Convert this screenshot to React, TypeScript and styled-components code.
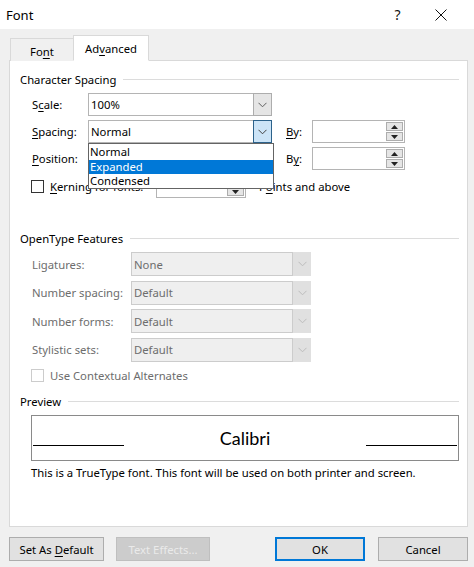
import React from "react";
import styled, { createGlobalStyle, css } from "styled-components";

const Global = createGlobalStyle`
  html, body { margin: 0; padding: 0; background: #f0f0f0; }
  body {
    font-family: "Noto Sans", "Liberation Sans", sans-serif;
    font-size: 11.3px;
    color: #000;
  }
  * { box-sizing: border-box; }
`;

const Window = styled.div`
  width: 474px;
  height: 567px;
  background: #f0f0f0;
  display: flex;
  flex-direction: column;
  overflow: hidden;
`;

const TitleBar = styled.div`
  height: 29px;
  background: #fff;
  display: flex;
  align-items: center;
  padding-left: 6px;
  padding-right: 12px;
  flex-shrink: 0;
`;

const Title = styled.div`
  flex: 1;
  font-size: 13px;
`;

const TitleButton = styled.div`
  width: 43px;
  display: flex;
  justify-content: center;
  align-items: center;
  font-size: 14px;
  color: #111;
`;

const Body = styled.div`
  padding: 6px 6px 0 9px;
`;

const TabStrip = styled.div`
  display: flex;
  align-items: flex-end;
  height: 26px;
  margin-bottom: -1px;
  position: relative;
  z-index: 1;
`;

const Tab = styled.div<{ $active?: boolean }>`
  display: flex;
  align-items: center;
  justify-content: center;
  border: 1px solid #d9d9d9;
  ${(p) =>
    p.$active
      ? css`
          background: #fff;
          height: 26px;
          width: 76px;
          border-bottom-color: #fff;
          margin-left: -1px;
        `
      : css`
          background: #f0f0f0;
          height: 23px;
          width: 64px;
          margin-left: 1px;
          border-bottom: none;
          padding-top: 2px;
        `}
`;

const Panel = styled.div`
  background: #fff;
  border: 1px solid #d9d9d9;
  width: 459px;
  height: 467px;
  padding: 10px 0 0 10px;
`;

const GroupHeader = styled.div<{ $mt?: number }>`
  display: flex;
  align-items: center;
  height: 16px;
  margin-top: ${(p) => p.$mt ?? 0}px;
  &::after {
    content: "";
    flex: 1;
    height: 1px;
    background: #dcdcdc;
    margin-left: 7px;
    margin-right: 8px;
  }
`;

const Rows = styled.div<{ $gap: number; $mt: number }>`
  display: flex;
  flex-direction: column;
  gap: ${(p) => p.$gap}px;
  margin-top: ${(p) => p.$mt}px;
  padding-left: 12px;
`;

const Row = styled.div<{ $h?: number; $mt?: number }>`
  display: flex;
  align-items: center;
  height: ${(p) => p.$h ?? 23}px;
  margin-top: ${(p) => p.$mt ?? 0}px;
`;

const Label = styled.div<{ $w: number; $disabled?: boolean; $ml?: number }>`
  width: ${(p) => p.$w}px;
  flex-shrink: 0;
  margin-left: ${(p) => p.$ml ?? 0}px;
  color: ${(p) => (p.$disabled ? "#6d6d6d" : "#000")};
  white-space: nowrap;
`;

const U = styled.span`
  text-decoration: underline;
  text-underline-offset: 2px;
`;

const SelectBox = styled.div<{ $w: number; $h?: number; $disabled?: boolean }>`
  position: relative;
  width: ${(p) => p.$w}px;
  height: ${(p) => p.$h ?? 23}px;
  flex-shrink: 0;
  display: flex;
  border: 1px solid ${(p) => (p.$disabled ? "#cccccc" : "#b4b4b4")};
  background: ${(p) => (p.$disabled ? "#efefef" : "#fff")};
  color: ${(p) => (p.$disabled ? "#6d6d6d" : "#000")};
`;

const SelectValue = styled.div`
  flex: 1;
  display: flex;
  align-items: center;
  padding-left: 2px;
`;

const ArrowButton = styled.div<{ $focused?: boolean; $disabled?: boolean }>`
  width: 19px;
  display: flex;
  align-items: center;
  justify-content: center;
  ${(p) =>
    p.$disabled
      ? css`
          background: #e0e0e0;
          margin: -1px -1px -1px 0;
          border-left: 1px solid #cccccc;
        `
      : p.$focused
      ? css`
          background: #cce4f7;
          border: 1px solid #2c628b;
          margin: -1px -1px -1px 0;
        `
      : css`
          background: #e5e5e5;
          border: 1px solid #adadad;
          margin: -1px -1px -1px 0;
        `}
`;

const Chevron = ({ color }: { color: string }) => (
  <svg width="9" height="6" viewBox="0 0 9 6">
    <path d="M0.5 0.8 L4.5 4.8 L8.5 0.8" fill="none" stroke={color} strokeWidth="1" />
  </svg>
);

const DropList = styled.div`
  position: absolute;
  top: 22px;
  left: -1px;
  width: 186px;
  height: 46px;
  background: #fff;
  border: 1px solid #646464;
  padding-top: 1px;
  z-index: 5;
`;

const DropItem = styled.div<{ $selected?: boolean }>`
  height: 14.6px;
  line-height: 14.6px;
  padding-left: 1px;
  background: ${(p) => (p.$selected ? "#0078d7" : "transparent")};
  color: ${(p) => (p.$selected ? "#fff" : "#000")};
`;

const SpinBox = styled.div<{ $w: number }>`
  width: ${(p) => p.$w}px;
  height: 23px;
  flex-shrink: 0;
  border: 1px solid #b4b4b4;
  background: #fff;
  display: flex;
  justify-content: flex-end;
  padding: 1px;
`;

const SpinButtons = styled.div`
  width: 17px;
  display: flex;
  flex-direction: column;
  gap: 1px;
`;

const SpinHalf = styled.div`
  flex: 1;
  background: #e5e5e5;
  border: 1px solid #adadad;
  display: flex;
  align-items: center;
  justify-content: center;
`;

const Tri = ({ up }: { up?: boolean }) => (
  <svg width="7" height="4" viewBox="0 0 7 4">
    <path d={up ? "M0 4 L3.5 0 L7 4 Z" : "M0 0 L3.5 4 L7 0 Z"} fill="#222" />
  </svg>
);

const Spin = ({ w }: { w: number }) => (
  <SpinBox $w={w}>
    <SpinButtons>
      <SpinHalf>
        <Tri up />
      </SpinHalf>
      <SpinHalf>
        <Tri />
      </SpinHalf>
    </SpinButtons>
  </SpinBox>
);

const Check = styled.div<{ $disabled?: boolean }>`
  width: 13px;
  height: 13px;
  flex-shrink: 0;
  border: 1px solid ${(p) => (p.$disabled ? "#cccccc" : "#333")};
  background: #fff;
  margin-left: -1px;
  margin-right: 6px;
`;

const PreviewBox = styled.div`
  margin: 6px 0 0 11px;
  width: 428px;
  height: 46px;
  border: 1px solid #8a8a8a;
  display: flex;
  align-items: flex-end;
  justify-content: space-between;
  padding: 0 1px 14px 1px;
  position: relative;
`;

const PreviewLine = styled.div`
  width: 91px;
  height: 1px;
  background: #000;
`;

const PreviewText = styled.div`
  position: absolute;
  left: 0;
  right: 0;
  top: 10px;
  text-align: center;
  font-family: Lato, "Noto Sans", sans-serif;
  font-size: 18px;
  line-height: 24px;
`;

const Note = styled.div`
  margin: 4px 0 0 11px;
  line-height: 16px;
`;

const ButtonBar = styled.div`
  display: flex;
  align-items: center;
  padding: 10px 6px 0 9px;
`;

const Button = styled.div<{ $w: number; $disabled?: boolean; $default?: boolean; $ml?: number }>`
  width: ${(p) => p.$w}px;
  height: 24px;
  margin-left: ${(p) => p.$ml ?? 0}px;
  display: flex;
  align-items: center;
  justify-content: center;
  background: ${(p) => (p.$disabled ? "#cccccc" : "#e1e1e1")};
  color: ${(p) => (p.$disabled ? "#eaeaea" : "#000")};
  border: ${(p) =>
    p.$default ? "2px solid #0078d7" : p.$disabled ? "1px solid #bfbfbf" : "1px solid #adadad"};
`;

const Spacer = styled.div`
  flex: 1;
`;

export default function App() {
  return (
    <Window>
      <Global />
      <TitleBar>
        <Title>Font</Title>
        <TitleButton>?</TitleButton>
        <TitleButton>
          <svg width="12" height="12" viewBox="0 0 12 12">
            <path d="M0.5 0.5 L11.5 11.5 M11.5 0.5 L0.5 11.5" stroke="#111" strokeWidth="1" />
          </svg>
        </TitleButton>
      </TitleBar>
      <Body>
        <TabStrip>
          <Tab>
            Fo<U>n</U>t
          </Tab>
          <Tab $active>
            Ad<U>v</U>anced
          </Tab>
        </TabStrip>
        <Panel>
          <GroupHeader>Character Spacing</GroupHeader>
          <Rows $gap={4} $mt={6}>
            <Row>
              <Label $w={56}>
                S<U>c</U>ale:
              </Label>
              <SelectBox $w={184}>
                <SelectValue>100%</SelectValue>
                <ArrowButton>
                  <Chevron color="#606060" />
                </ArrowButton>
              </SelectBox>
            </Row>
            <Row>
              <Label $w={56}>
                <U>S</U>pacing:
              </Label>
              <SelectBox $w={184}>
                <SelectValue>Normal</SelectValue>
                <ArrowButton $focused>
                  <Chevron color="#404040" />
                </ArrowButton>
                <DropList>
                  <DropItem>Normal</DropItem>
                  <DropItem $selected>Expanded</DropItem>
                  <DropItem>Condensed</DropItem>
                </DropList>
              </SelectBox>
              <Label $w={26} $ml={14}>
                <U>B</U>y:
              </Label>
              <Spin w={93} />
            </Row>
            <Row>
              <Label $w={56}>
                <U>P</U>osition:
              </Label>
              <SelectBox $w={184}>
                <SelectValue />
              </SelectBox>
              <Label $w={26} $ml={14}>
                B<U>y</U>:
              </Label>
              <Spin w={93} />
            </Row>
            <Row $mt={1}>
              <Check />
              <Label $w={106}>
                <U>K</U>erning for fonts:
              </Label>
              <Spin w={90} />
              <Label $w={120} $ml={13}>
                P<U>o</U>ints and above
              </Label>
            </Row>
          </Rows>

          <GroupHeader $mt={32}>OpenType Features</GroupHeader>
          <Rows $gap={4.5} $mt={6}>
            {[
              ["Ligatures:", "None"],
              ["Number spacing:", "Default"],
              ["Number forms:", "Default"],
              ["Stylistic sets:", "Default"],
            ].map(([l, v]) => (
              <Row key={l} $h={24}>
                <Label $w={99} $disabled>
                  {l}
                </Label>
                <SelectBox $w={180} $h={24} $disabled>
                  <SelectValue>{v}</SelectValue>
                  <ArrowButton $disabled>
                    <Chevron color="#bcbcbc" />
                  </ArrowButton>
                </SelectBox>
              </Row>
            ))}
          </Rows>
          <Rows $gap={0} $mt={5.5}>
            <Row $h={16}>
              <Check $disabled />
              <Label $w={200} $disabled>
                Use Contextual Alternates
              </Label>
            </Row>
          </Rows>

          <GroupHeader $mt={10}>Preview</GroupHeader>
          <PreviewBox>
            <PreviewLine />
            <PreviewText>Calibri</PreviewText>
            <PreviewLine />
          </PreviewBox>
          <Note>This is a TrueType font. This font will be used on both printer and screen.</Note>
        </Panel>
      </Body>
      <ButtonBar>
        <Button $w={95}>
          Set As&nbsp;<U>D</U>efault
        </Button>
        <Button $w={94} $ml={12} $disabled>
          Text Effects...
        </Button>
        <Spacer />
        <Button $w={90} $default>
          OK
        </Button>
        <Button $w={90} $ml={13}>
          Cancel
        </Button>
      </ButtonBar>
    </Window>
  );
}
